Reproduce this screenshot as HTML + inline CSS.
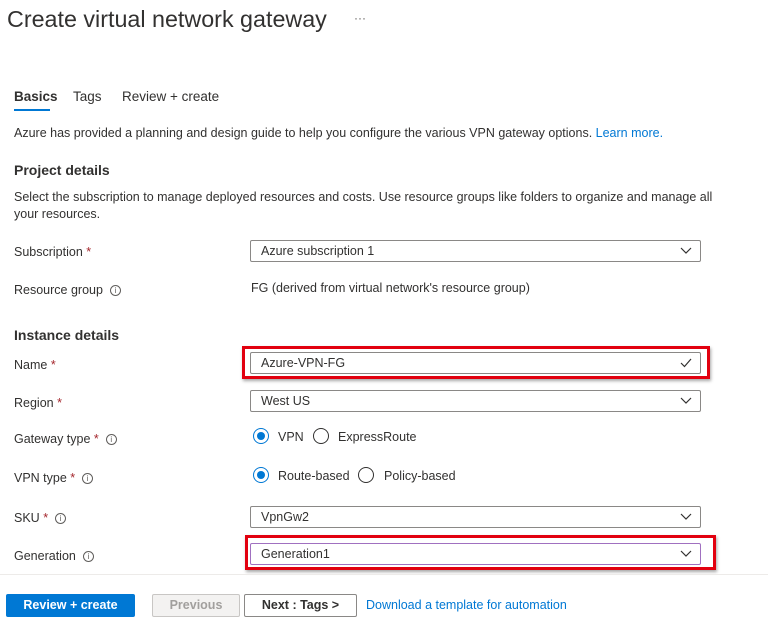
<!DOCTYPE html>
<html><head><meta charset="utf-8"><style>
body{margin:0;width:768px;height:628px;background:#fff;position:relative;overflow:hidden;font-family:"Liberation Sans",sans-serif;color:#323130;font-size:12.5px}
.a{position:absolute;white-space:nowrap}
.lbl{position:absolute;left:14px;white-space:nowrap}
.req{color:#a4262c}
.info{display:inline-block;width:9px;height:9px;border:1px solid #605e5c;border-radius:50%;font-size:8px;line-height:9px;text-align:center;margin-left:7px;vertical-align:1px;color:#605e5c}
.box{position:absolute;left:250px;width:451px;height:22px;border:1px solid #8a8886;border-radius:2px;box-sizing:border-box;}
.box span{position:absolute;left:10px;top:3px}
.chev{position:absolute;right:8px;top:6px}
.red{position:absolute;border:3px solid #e2000f;box-sizing:border-box;box-shadow:1px 2px 3px rgba(0,0,0,.35)}
.rad{position:absolute;width:16px;height:16px;border:1px solid #323130;border-radius:50%;box-sizing:border-box}
.rad.on{border-color:#0078d4}
.rad.on::after{content:"";position:absolute;left:3px;top:3px;width:8px;height:8px;border-radius:50%;background:#0078d4}
h3{margin:0;font-size:14px;font-weight:bold;position:absolute;left:14px;color:#323130}
.btn{position:absolute;top:594px;height:23px;box-sizing:border-box;font-weight:bold;font-size:12.5px;text-align:center;line-height:21px;border-radius:2px}
</style></head><body>
<div class="a" style="left:7px;top:6px;font-size:23.3px;color:#323130">Create virtual network gateway</div>
<div class="a" style="left:354px;top:11px;font-size:12px;color:#605e5c">···</div>
<div class="a" style="left:14px;top:89px;font-size:13.5px;font-weight:bold">Basics</div>
<div class="a" style="left:73px;top:89px;font-size:13.5px">Tags</div>
<div class="a" style="left:122px;top:89px;font-size:13.5px">Review + create</div>
<div class="a" style="left:14px;top:109px;width:36px;height:2px;background:#0078d4"></div>
<div class="a" style="left:14px;top:126px">Azure has provided a planning and design guide to help you configure the various VPN gateway options. <span style="color:#0078d4">Learn more.</span></div>
<h3 style="top:162px">Project details</h3>
<div class="a" style="left:14px;top:189px;line-height:17px">Select the subscription to manage deployed resources and costs. Use resource groups like folders to organize and manage all<br>your resources.</div>
<div class="lbl" style="top:245px">Subscription <span class="req">*</span></div>
<div class="box" style="top:240px"><span>Azure subscription 1</span><svg class="chev" width="12" height="8"><path d="M1 1l5 5 5-5" fill="none" stroke="#323130" stroke-width="1.2"/></svg></div>
<div class="lbl" style="top:283px">Resource group<span class="info">i</span></div>
<div class="a" style="left:251px;top:281px">FG (derived from virtual network's resource group)</div>
<h3 style="top:327px">Instance details</h3>
<div class="lbl" style="top:358px">Name <span class="req">*</span></div>
<div class="red" style="left:242px;top:346px;width:468px;height:33px"></div>
<div class="box" style="top:352px"><span>Azure-VPN-FG</span><svg class="chev" width="12" height="10" style="top:5px"><path d="M1 5l3.5 3.5L11 1" fill="none" stroke="#323130" stroke-width="1.2"/></svg></div>
<div class="lbl" style="top:396px">Region <span class="req">*</span></div>
<div class="box" style="top:390px"><span>West US</span><svg class="chev" width="12" height="8"><path d="M1 1l5 5 5-5" fill="none" stroke="#323130" stroke-width="1.2"/></svg></div>
<div class="lbl" style="top:432px">Gateway type <span class="req">*</span><span class="info">i</span></div>
<div class="rad on" style="left:253px;top:428px"></div><div class="a" style="left:278px;top:430px">VPN</div>
<div class="rad" style="left:313px;top:428px"></div><div class="a" style="left:338px;top:430px">ExpressRoute</div>
<div class="lbl" style="top:471px">VPN type <span class="req">*</span><span class="info">i</span></div>
<div class="rad on" style="left:253px;top:467px"></div><div class="a" style="left:278px;top:469px">Route-based</div>
<div class="rad" style="left:358px;top:467px"></div><div class="a" style="left:384px;top:469px">Policy-based</div>
<div class="lbl" style="top:511px">SKU <span class="req">*</span><span class="info">i</span></div>
<div class="box" style="top:506px"><span>VpnGw2</span><svg class="chev" width="12" height="8"><path d="M1 1l5 5 5-5" fill="none" stroke="#323130" stroke-width="1.2"/></svg></div>
<div class="lbl" style="top:549px">Generation<span class="info">i</span></div>
<div class="red" style="left:245px;top:535px;width:471px;height:35px"></div>
<div class="box" style="top:543px;border-color:#a070c0"><span>Generation1</span><svg class="chev" width="12" height="8"><path d="M1 1l5 5 5-5" fill="none" stroke="#323130" stroke-width="1.2"/></svg></div>
<div class="a" style="left:0;top:574px;width:768px;height:1px;background:#edebe9"></div>
<div class="btn" style="left:6px;width:129px;background:#0078d4;color:#fff;line-height:23px">Review + create</div>
<div class="btn" style="left:152px;width:88px;background:#f3f2f1;border:1px solid #c8c6c4;color:#a19f9d">Previous</div>
<div class="btn" style="left:244px;width:113px;background:#fff;border:1px solid #8a8886;color:#323130">Next : Tags &gt;</div>
<div class="a" style="left:366px;top:598px;color:#0078d4">Download a template for automation</div>
</body></html>
